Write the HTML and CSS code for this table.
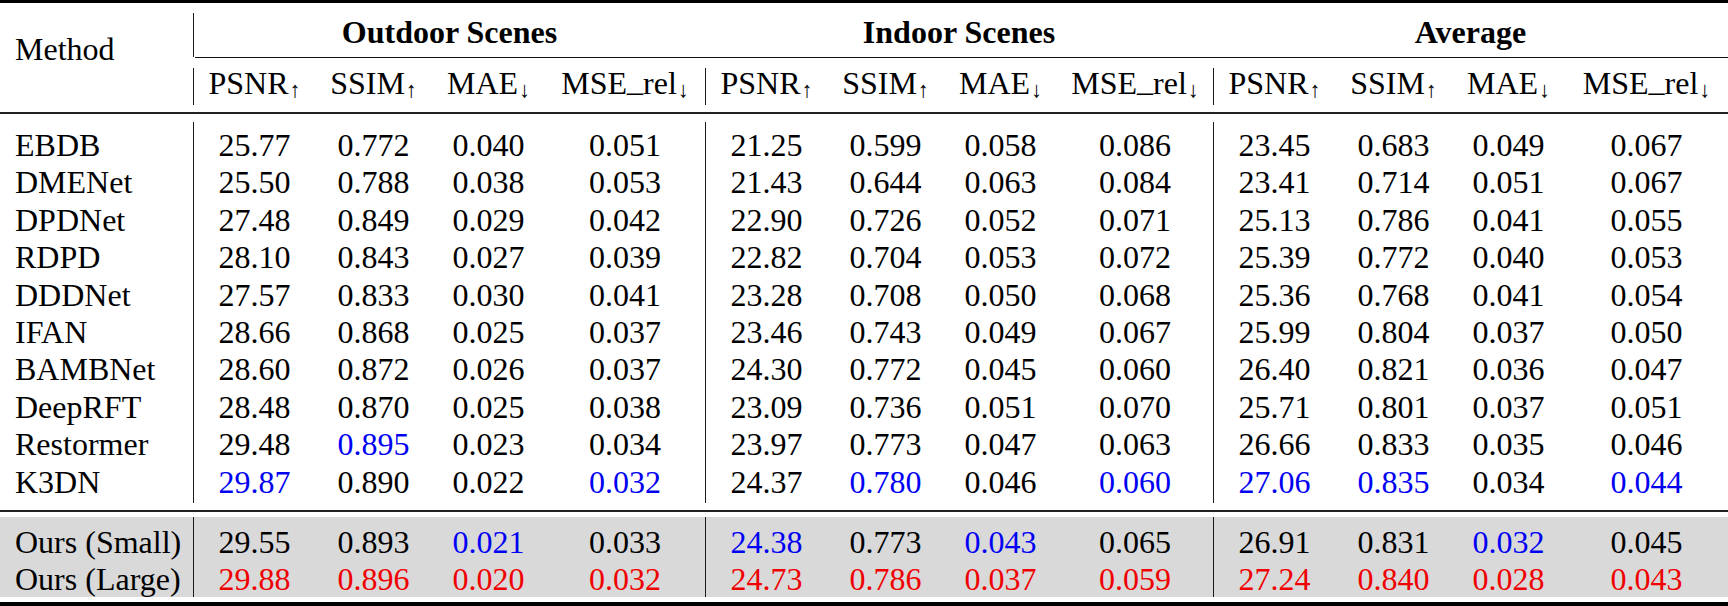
FILE: index.html
```html
<!DOCTYPE html>
<html lang="en">
<head>
<meta charset="utf-8">
<title>Results</title>
<link rel="stylesheet" href="styles.css">
</head>
<body>
<table class="results">
  <colgroup>
    <col class="c-method">
    <col class="c-psnr"><col class="c-ssim"><col class="c-mae"><col class="c-mse-o">
    <col class="c-psnr"><col class="c-ssim"><col class="c-mae"><col class="c-mse-i">
    <col class="c-psnr"><col class="c-ssim"><col class="c-mae"><col class="c-mse-a">
  </colgroup>
  <thead>
    <tr class="rule-row"><td colspan="13"><div class="rule rule-top"></div></td></tr>
    <tr class="h1">
      <th rowspan="3" class="method-head">Method</th>
      <th colspan="4" class="bar">Outdoor Scenes</th>
      <th colspan="4">Indoor Scenes</th>
      <th colspan="4">Average</th>
    </tr>
    <tr class="rule-row"><td colspan="12"><div class="cmid"></div></td></tr>
    <tr class="h2">
      <th class="bar">PSNR<span class="arr">↑</span></th><th>SSIM<span class="arr">↑</span></th><th>MAE<span class="arr">↓</span></th><th>MSE<span class="us">_</span>rel<span class="arr">↓</span></th>
      <th class="bar">PSNR<span class="arr">↑</span></th><th>SSIM<span class="arr">↑</span></th><th>MAE<span class="arr">↓</span></th><th>MSE<span class="us">_</span>rel<span class="arr">↓</span></th>
      <th class="bar">PSNR<span class="arr">↑</span></th><th>SSIM<span class="arr">↑</span></th><th>MAE<span class="arr">↓</span></th><th>MSE<span class="us">_</span>rel<span class="arr">↓</span></th>
    </tr>
    <tr class="rule-row"><td colspan="13"><div class="rule rule-mid"></div></td></tr>
  </thead>
  <tbody class="body">
    <tr class="first"><td class="m">EBDB</td><td class="bar">25.77</td><td>0.772</td><td>0.040</td><td>0.051</td><td class="bar">21.25</td><td>0.599</td><td>0.058</td><td>0.086</td><td class="bar">23.45</td><td>0.683</td><td>0.049</td><td>0.067</td></tr>
    <tr><td class="m">DMENet</td><td class="bar">25.50</td><td>0.788</td><td>0.038</td><td>0.053</td><td class="bar">21.43</td><td>0.644</td><td>0.063</td><td>0.084</td><td class="bar">23.41</td><td>0.714</td><td>0.051</td><td>0.067</td></tr>
    <tr><td class="m">DPDNet</td><td class="bar">27.48</td><td>0.849</td><td>0.029</td><td>0.042</td><td class="bar">22.90</td><td>0.726</td><td>0.052</td><td>0.071</td><td class="bar">25.13</td><td>0.786</td><td>0.041</td><td>0.055</td></tr>
    <tr><td class="m">RDPD</td><td class="bar">28.10</td><td>0.843</td><td>0.027</td><td>0.039</td><td class="bar">22.82</td><td>0.704</td><td>0.053</td><td>0.072</td><td class="bar">25.39</td><td>0.772</td><td>0.040</td><td>0.053</td></tr>
    <tr><td class="m">DDDNet</td><td class="bar">27.57</td><td>0.833</td><td>0.030</td><td>0.041</td><td class="bar">23.28</td><td>0.708</td><td>0.050</td><td>0.068</td><td class="bar">25.36</td><td>0.768</td><td>0.041</td><td>0.054</td></tr>
    <tr><td class="m">IFAN</td><td class="bar">28.66</td><td>0.868</td><td>0.025</td><td>0.037</td><td class="bar">23.46</td><td>0.743</td><td>0.049</td><td>0.067</td><td class="bar">25.99</td><td>0.804</td><td>0.037</td><td>0.050</td></tr>
    <tr><td class="m">BAMBNet</td><td class="bar">28.60</td><td>0.872</td><td>0.026</td><td>0.037</td><td class="bar">24.30</td><td>0.772</td><td>0.045</td><td>0.060</td><td class="bar">26.40</td><td>0.821</td><td>0.036</td><td>0.047</td></tr>
    <tr><td class="m">DeepRFT</td><td class="bar">28.48</td><td>0.870</td><td>0.025</td><td>0.038</td><td class="bar">23.09</td><td>0.736</td><td>0.051</td><td>0.070</td><td class="bar">25.71</td><td>0.801</td><td>0.037</td><td>0.051</td></tr>
    <tr><td class="m">Restormer</td><td class="bar">29.48</td><td class="blue">0.895</td><td>0.023</td><td>0.034</td><td class="bar">23.97</td><td>0.773</td><td>0.047</td><td>0.063</td><td class="bar">26.66</td><td>0.833</td><td>0.035</td><td>0.046</td></tr>
    <tr class="last"><td class="m">K3DN</td><td class="bar blue">29.87</td><td>0.890</td><td>0.022</td><td class="blue">0.032</td><td class="bar">24.37</td><td class="blue">0.780</td><td>0.046</td><td class="blue">0.060</td><td class="bar blue">27.06</td><td class="blue">0.835</td><td>0.034</td><td class="blue">0.044</td></tr>
  </tbody>
  <tbody>
    <tr class="rule-row"><td colspan="13"><div class="rule rule-sep"></div></td></tr>
  </tbody>
  <tbody class="ours">
    <tr class="first"><td class="m">Ours (Small)</td><td class="bar">29.55</td><td>0.893</td><td class="blue">0.021</td><td>0.033</td><td class="bar blue">24.38</td><td>0.773</td><td class="blue">0.043</td><td>0.065</td><td class="bar">26.91</td><td>0.831</td><td class="blue">0.032</td><td>0.045</td></tr>
    <tr class="last"><td class="m">Ours (Large)</td><td class="bar red">29.88</td><td class="red">0.896</td><td class="red">0.020</td><td class="red">0.032</td><td class="bar red">24.73</td><td class="red">0.786</td><td class="red">0.037</td><td class="red">0.059</td><td class="bar red">27.24</td><td class="red">0.840</td><td class="red">0.028</td><td class="red">0.043</td></tr>
  </tbody>
  <tbody>
    <tr class="rule-row"><td colspan="13"><div class="rule rule-bottom"></div></td></tr>
  </tbody>
</table>
</body>
</html>
```

FILE: styles.css
```css
html, body {
  margin: 0;
  padding: 0;
  background: #ffffff;
}

body {
  font-family: "Liberation Serif", "Times New Roman", serif;
  font-size: 32px;
  color: #000000;
}

.results {
  width: 1728px;
  table-layout: fixed;
  border-collapse: separate;
  border-spacing: 0;
}

.c-method { width: 193px; }
.c-psnr { width: 122px; }
.c-ssim { width: 117px; }
.c-mae { width: 113px; }
.c-mse-o { width: 160px; }
.c-mse-i { width: 156px; }
.c-mse-a { width: 163px; }

.results th,
.results td {
  padding: 0;
  text-align: center;
  vertical-align: top;
  white-space: nowrap;
}

.results th {
  font-weight: normal;
}

.bar {
  border-left: 1px solid #1a1a1a;
}

/* rules */
.rule-row td {
  font-size: 0;
  line-height: 0;
}

.rule {
  background: #000000;
}

.rule-top {
  height: 3px;
  margin-bottom: 10px;
}

.cmid {
  height: 0;
  border-top: 1px solid #111111;
  margin-left: 2px;
  margin-bottom: 10px;
}

.rule-mid {
  height: 2px;
  margin-top: 7px;
  margin-bottom: 8px;
  background: #222222;
}

.rule-sep {
  height: 2px;
  margin-top: 7px;
  margin-bottom: 5px;
  background: #222222;
}

.rule-bottom {
  height: 4px;
  margin-top: 5px;
}

/* header */
.h1 th {
  font-weight: bold;
  line-height: 38px;
  padding-bottom: 6px;
}

.h1 .method-head {
  font-weight: normal;
  text-align: left;
  padding-left: 15px;
  padding-top: 17px;
  padding-bottom: 0;
  line-height: 38px;
}

.h2 th {
  line-height: 29px;
  padding-top: 1px;
  padding-bottom: 7px;
}

.arr {
  font-size: 22px;
  position: relative;
  top: 3px;
  line-height: 0;
  margin-left: 1px;
}

.us {
  position: relative;
  top: -3px;
}

/* body rows */
.body td {
  line-height: 37.4px;
}

.body .first td {
  padding-top: 5px;
}

.body .last td {
  padding-bottom: 2px;
}

.results td.m {
  text-align: left;
  padding-left: 15px;
}

.ours td {
  background: #d9d9d9;
}

.ours .first td {
  line-height: 38px;
  padding-top: 6px;
}

.ours .last td {
  line-height: 36px;
}

.blue {
  color: #0000f2;
}

.red {
  color: #f00000;
}
```
